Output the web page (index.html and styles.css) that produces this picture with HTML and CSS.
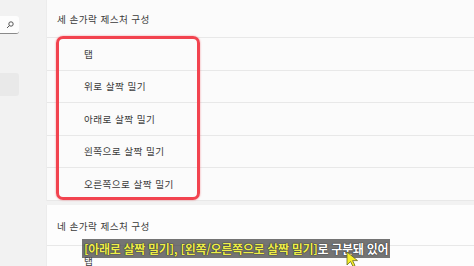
FILE: index.html
```html
<!DOCTYPE html>
<html lang="ko">
<head>
<meta charset="utf-8">
<link rel="stylesheet" href="styles.css">
</head>
<body>
<div class="app">
  <aside class="sidebar">
    <div class="search">
      <svg class="search-icon" width="8" height="8" viewBox="0 0 8 8"><circle cx="5" cy="3" r="2.2" fill="none" stroke="#444" stroke-width="0.9"/><line x1="3.4" y1="4.6" x2="1" y2="7" stroke="#444" stroke-width="0.9"/></svg>
    </div>
    <div class="nav-item"></div>
  </aside>
  <main class="main">
    <section class="card">
      <div class="card-header">세 손가락 제스처 구성</div>
      <div class="row">탭</div>
      <div class="row">위로 살짝 밀기</div>
      <div class="row">아래로 살짝 밀기</div>
      <div class="row">왼쪽으로 살짝 밀기</div>
      <div class="row">오른쪽으로 살짝 밀기</div>
    </section>
    <section class="card card-second">
      <div class="card-header header-second">네 손가락 제스처 구성</div>
      <div class="row">탭</div>
    </section>
  </main>
</div>
<div class="highlight"></div>
<div class="caption"><span class="hl">[아래로 살짝 밀기], [왼쪽/오른쪽으로 살짝 밀기]</span>로 구분돼 있어</div>
<svg class="cursor" width="14" height="16" viewBox="0 0 14 16"><path d="M1 1 L1 14 L4.5 10.5 L7 15.5 L9 14.5 L6.6 9.6 L11.5 9.6 Z" fill="#f5ee2a" stroke="#6a6a20" stroke-width="0.8"/></svg>
</body>
</html>
```

FILE: styles.css
```css
html, body {
  margin: 0;
  padding: 0;
  width: 474px;
  height: 266px;
  overflow: hidden;
  background: #f2f2f2;
  font-family: "Noto Sans CJK KR", "Noto Sans", sans-serif;
  color: #3a3a3a;
}
.app {
  display: flex;
  height: 266px;
}
.sidebar {
  width: 46px;
  flex: none;
  background: #f2f2f2;
  display: flex;
  flex-direction: column;
}
.search {
  margin-top: 16px;
  width: 19px;
  height: 18px;
  box-sizing: border-box;
  background: #fdfdfd;
  border-bottom: 1px solid #8a8a8a;
  border-radius: 0 3px 3px 0;
  display: flex;
  align-items: center;
  justify-content: flex-end;
  padding-right: 5px;
}
.nav-item {
  margin-top: 39px;
  width: 19px;
  height: 23px;
  background: #e9e9e9;
  border-radius: 0 3px 3px 0;
}
.main {
  flex: 1;
  display: flex;
  flex-direction: column;
  gap: 4px;
}
.card {
  background: #fbfbfb;
  border-left: 1px solid #ececec;
}
.card-second {
  background: #fdfdfd;
}
.card-header {
  height: 38px;
  box-sizing: border-box;
  border-bottom: 1px solid #e8e8e8;
  padding-left: 10px;
  display: flex;
  align-items: center;
  font-size: 9.6px;
  letter-spacing: 0.45px;
}
.header-second {
  height: 41px;
  padding-top: 3px;
}
.row {
  height: 32.5px;
  box-sizing: border-box;
  border-bottom: 1px solid #e8e8e8;
  padding-left: 37px;
  display: flex;
  align-items: center;
  font-size: 9.6px;
  letter-spacing: 0.45px;
}
.highlight {
  position: absolute;
  left: 56px;
  top: 36px;
  width: 144px;
  height: 164px;
  box-sizing: border-box;
  border: 3px solid #f2434f;
  border-radius: 7px;
  box-shadow: 0 0 2px rgba(240, 60, 70, 0.6);
}
.caption {
  position: absolute;
  left: 82px;
  top: 239px;
  height: 19px;
  padding: 0 2px;
  background: rgba(70, 70, 70, 0.75);
  color: #ffffff;
  font-size: 12px;
  font-weight: 700;
  letter-spacing: -0.3px;
  line-height: 19px;
  white-space: nowrap;
  text-shadow: 0 0 1px #222, 0 0 1px #222;
}
.hl {
  color: #eeee4a;
}
.cursor {
  position: absolute;
  left: 346px;
  top: 251px;
}
```
